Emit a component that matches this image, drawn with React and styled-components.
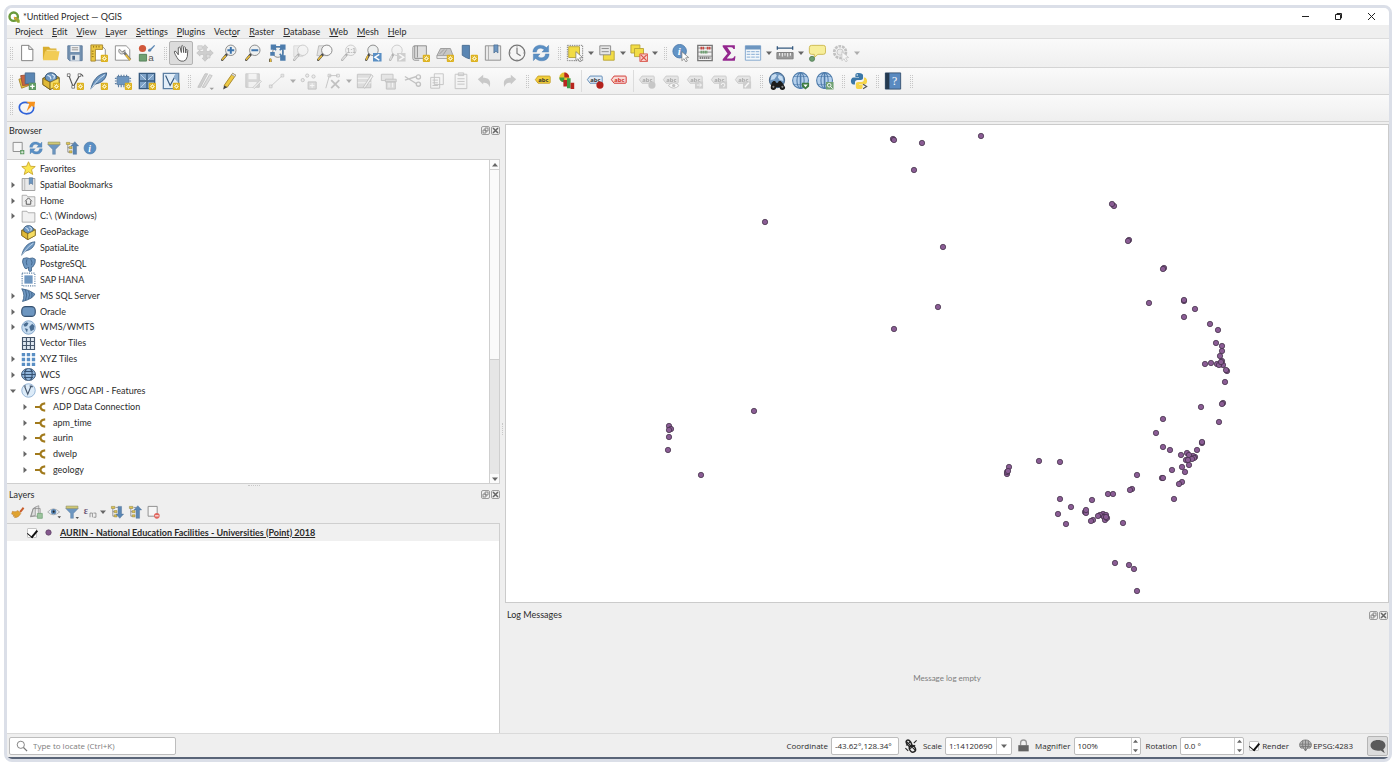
import React from 'react';
import styled, { createGlobalStyle, css } from 'styled-components';

const GlobalStyle = createGlobalStyle`
  * {
    box-sizing: border-box;
  }
  body {
    margin: 0;
    background: #fff;
    color: #2b2b2b;
    font-family: Lato, "Open Sans", sans-serif;
    font-size: 9px;
    font-variant-ligatures: none;
    line-height: 12px;
  }
  button, input, select {
    margin: 0;
    padding: 0;
    border: none;
    background: none;
    color: inherit;
    font: inherit;
  }
  ul {
    margin: 0;
    padding: 0;
    list-style: none;
  }
  svg {
    display: block;
    flex: none;
  }
`

const PageStyled = styled.div`
  display: flex;
  height: 100vh;
  padding: 5px 7px 5px 4px;
`
const WindowStyled = styled.div`
  flex: 1;
  display: flex;
  flex-direction: column;
  min-width: 0;
  border: 3px solid #dbdfe8;
  border-radius: 8px;
  background: #efefef;
  overflow: hidden;
`
const TitleBarStyled = styled.header`
  display: flex;
  align-items: center;
  height: 17px;
  flex: none;
  padding: 0 1px;
  background: #fff;
`
const TitleStyled = styled.h1`
  flex: 1;
  margin: 0 0 0 3px;
  font-size: 9px;
  font-weight: 400;
`
const WindowButtonStyled = styled.button`
  width: 33px;
  height: 17px;
  display: flex;
  align-items: center;
  justify-content: center;
`
const MenuBarStyled = styled.nav`
  display: flex;
  flex: none;
  gap: 9px;
  height: 14px;
  padding-left: 8px;
  border-bottom: 1px solid #dcdcdc;

  u {
    text-underline-offset: 1px;
  }
`
const ToolbarStyled = styled.div`
  display: flex;
  align-items: center;
  flex: none;
  gap: 2px;
  height: ${props => props.$tall ? 29 : 27}px;
  border-bottom: 1px solid #d4d4d4;
  background: linear-gradient(#fafafa, #efefef);
`
const ToolGroupStyled = styled.div`
  display: flex;
  align-items: center;
`
const GripStyled = styled.span`
  width: 3px;
  height: 13px;
  margin: 0 2px 0 3px;
  border: 0 dotted #c6c6c6;
  border-width: 0 1px;
`
const DividerStyled = styled.span`
  width: 1px;
  height: 22px;
  margin: 0 1px 0 2px;
  background: #dcdcdc;
`
const ToolButtonStyled = styled.button`
  display: flex;
  align-items: center;
  justify-content: center;
  width: 24px;
  height: 24px;

  ${props => props.$pressed && css`
    border: 1px solid #b3b3b3;
    border-radius: 2px;
    background: #dcdcdc;
  `}
  ${props => props.disabled && css`
    opacity: 0.4;
    filter: grayscale(1);
  `}
`
const ToolMenuStyled = styled.button`
  display: flex;
  align-items: center;
  justify-content: center;
  width: 8px;
  height: 24px;
  opacity: ${props => props.disabled ? 0.5 : 1};
`
const MainStyled = styled.div`
  display: flex;
  flex: 1;
  min-height: 0;
  padding-top: 2px;
`
const LeftColumnStyled = styled.div`
  flex: 0 0 494px;
  display: grid;
  grid-template-rows: minmax(0, 1fr) 4px 245px;
`
const RightColumnStyled = styled.div`
  flex: 1;
  min-width: 0;
  display: grid;
  grid-template-rows: minmax(0, 1fr) 130px;
`
const SplitterStyled = styled.div`
  display: flex;
  align-items: center;
  justify-content: center;
  flex: 0 0 4px;

  &::after {
    content: "";
    width: ${props => props.$vertical ? 1 : 12}px;
    height: ${props => props.$vertical ? 12 : 1}px;
    border: 0 dotted #c8c8c8;
    border-width: ${props => props.$vertical ? '0 0 0 1px' : '1px 0 0 0'};
  }
`
const DockStyled = styled.section`
  display: flex;
  flex-direction: column;
  min-height: 0;
`
const DockHeaderStyled = styled.div`
  display: flex;
  align-items: center;
  gap: 1px;
  flex: none;
  height: ${props => props.$tall ? 24 : 13}px;
  padding: 0 1px 0 2px;
`
const DockTitleStyled = styled.h2`
  flex: 1;
  margin: 0;
  font-size: 9px;
  font-weight: 400;
`
const DockButtonStyled = styled.button`
  display: flex;
  align-items: center;
  justify-content: center;
  width: 9px;
  height: 9px;
  border: 1px solid #9c9c9c;
  border-radius: 2px;
`
const DockToolsStyled = styled.div`
  display: flex;
  align-items: center;
  flex: none;
  gap: 4px;
  height: 22px;
  padding-left: 4px;

  button {
    display: flex;
    align-items: center;
    gap: 3px;
  }
`
const TreeFrameStyled = styled.div`
  display: flex;
  flex: 1;
  min-height: 0;
  margin-right: 1px;
  border: 1px solid #cfcfcf;
  border-left: none;
  background: #fff;
`
const TreeStyled = styled.ul`
  flex: 1;
  display: grid;
  grid-auto-rows: 1fr;
  padding: 1px 0 5px 0;
`
const TreeRowStyled = styled.li`
  display: flex;
  align-items: center;
  gap: ${props => props.$depth ? 6 : 4}px;
  min-height: 0;
  padding-left: ${props => props.$depth ? 14 : 2}px;
`
const ExpandStyled = styled.button`
  display: flex;
  align-items: center;
  justify-content: center;
  width: 8px;
  height: 12px;
`
const ExpandGapStyled = styled.span`
  width: 8px;
`
const ScrollbarStyled = styled.div`
  display: flex;
  flex-direction: column;
  width: 10px;
  border-left: 1px solid #cfcfcf;
  background: #e6e6e6;
`
const ScrollButtonStyled = styled.button`
  display: flex;
  align-items: center;
  justify-content: center;
  height: 9px;
  background: #fbfbfb;

  &:last-child {
    margin-top: auto;
  }
`
const ScrollThumbStyled = styled.div`
  flex: 0 0 59%;
  border: solid #cfcfcf;
  border-width: 1px 0;
  background: #fafafa;
`
const LayerListStyled = styled.ul`
  flex: 1;
  margin-right: 1px;
  border-top: 1px solid #cfcfcf;
  border-right: 1px solid #cfcfcf;
  background: #fff;
`
const LayerRowStyled = styled.li`
  display: flex;
  align-items: center;
  height: 17px;
  padding-left: 20px;
  background: #f0f0f0;

  label {
    display: flex;
    align-items: center;
    gap: 8px;
    font-weight: 700;
    text-decoration: underline;
  }
`
const CheckboxStyled = styled.input`
  appearance: none;
  display: grid;
  place-items: center;
  width: 10px;
  height: 10px;
  border: 1px solid #c4c4c4;
  border-radius: 1px;
  background: #fff;

  &:checked::after {
    content: "";
    width: 5px;
    height: 8px;
    border: solid #111;
    border-width: 0 2px 1px 0;
    transform: translateY(-1px) rotate(40deg);
  }
`
const MapStyled = styled.div`
  min-height: 0;
  border: 1px solid #cbcbcb;
  background: #fff;

  svg {
    width: 100%;
    height: 100%;
  }
`
const LogBodyStyled = styled.div`
  flex: 1;
  display: flex;
  align-items: center;
  justify-content: center;
  padding-bottom: 4px;
  color: #7d7d7d;
  font-size: 8px;
`
const StatusBarStyled = styled.footer`
  display: flex;
  align-items: center;
  flex: none;
  height: 26px;
  padding: 0 1px 0 2px;
  border-top: 1px solid #dadada;
  border-bottom: 2px solid #5a6578;
  font-family: "Open Sans", sans-serif;
  font-size: 8px;

  label {
    display: flex;
    align-items: center;
    gap: 3px;
  }
`
const FieldStyled = styled.span`
  display: flex;
  align-items: center;
  width: ${props => props.$width}px;
  height: 18px;
  border: 1px solid #bdbdbd;
  border-radius: 2px;
  background: #fff;

  input, select {
    flex: 1;
    min-width: 0;
    height: 16px;
    padding-left: 3px;
    appearance: none;
    outline: none;
  }
  input::placeholder {
    color: #7d7d7d;
    opacity: 1;
  }
`
const LocatorStyled = styled(FieldStyled)`
  margin-right: auto;
  padding-left: 6px;
  gap: 2px;
`
const FieldEndStyled = styled.span`
  display: flex;
  flex-direction: column;
  align-items: center;
  justify-content: center;
  gap: 4px;
  width: ${props => props.$wide ? 15 : 9}px;
  height: 16px;
  border-left: 1px solid #cfcfcf;

  button {
    display: flex;
  }
`
const StatusGroupStyled = styled.div`
  display: flex;
  align-items: center;
  gap: 5px;
`
const CrsButtonStyled = styled.button`
  display: flex;
  align-items: center;
  gap: 1px;
  margin: 0 9px 0 5px;
`
const StatusIconStyled = styled.button`
  display: flex;
  align-items: center;
  justify-content: center;
`
const MessageButtonStyled = styled(StatusIconStyled)`
  width: 21px;
  height: 20px;
  border: 1px solid #b5b5b5;
  border-radius: 2px;
  background: #dcdcdc;
`

// shared bits of the drawings
const Badge = () => (
  <g>
    <rect x="12" y="12" width="8" height="8" rx="1" fill="#dcb11e" />
    <path d="M16 13.2v5.6M13.2 16h5.6M14 14l4 4M18 14l-4 4" stroke="#fff8d0" strokeWidth="1" />
    <circle cx="16" cy="16" r=".8" fill="#dcb11e" />
  </g>
);
const Lens = ({ x = 12, y = 7, r = 5.8, fill = '#eef0f0' }) => (
  <g>
    <path d={`M${x - 4} ${y + 4}L2.5 17.5`} stroke="#4a4a4a" strokeWidth="2.800" strokeLinecap="round" />
    <path d={`M${x - 6} ${y + 6.5}L2.8 17`} stroke="#e3b83c" strokeWidth="1.800" strokeLinecap="round" />
    <circle cx={x} cy={y} r={r} fill={fill} stroke="#858585" strokeWidth="1" />
  </g>
);
const Globe = ({ fill = '#b5d0ec', line = '#4f7cab' }) => (
  <g fill="none" stroke={line} strokeWidth="1.200">
    <circle cx="9.500" cy="9.500" r="8.800" fill={fill} />
    <ellipse cx="9.500" cy="9.500" rx="4" ry="8.800" />
    <path d="M9.500 .7v17.600" strokeWidth="1.800" />
    <path d="M2 5h15M2 14h15" strokeWidth=".7" />
  </g>
);
const Tag = ({ fill, stroke, color = '#333', text = 'abc' }) => (
  <g>
    <path d="M1.500 8.500L4.500 4.500H17q1 0 1 1v6q0 1-1 1H4.500z" fill={fill} stroke={stroke} strokeWidth="1" />
    <text x="4.800" y="10.800" fontSize="6.500" fontWeight="700" fontFamily="Open Sans, sans-serif" fill={color}>{text}</text>
  </g>
);
const Cursor = () => <path d="M11 8.500l7.500 6.500-3.400.4 2 3.400-1.800 1-1.900-3.500-2.400 2.300z" fill="#fff" stroke="#777" strokeWidth=".8" />;
const Funnel = ({ menu }) => (
  <g>
    <path d="M1 5h18l-7 7v7H8v-7z" fill="#6d96c0" stroke="#5c7fa3" strokeWidth=".6" />
    <path d="M1.500 1.500h17V5h-17z" fill="#cfc874" stroke="#8a8a65" strokeWidth=".8" />
    {menu && <path d="M15 17h5l-2.500 3z" fill="#555" />}
  </g>
);
const Refresh = () => (
  <g fill="#5a8fc4" stroke="#4577a9" strokeWidth=".4">
    <path d="M1 9C1 1 11-1 16 4l2.500-2.500V9H11l2.500-2.500C10 3.500 5.500 4.500 5 9z" />
    <path d="M19 11c0 8-10 10-15 5l-2.500 2.500V11H9l-2.500 2.500c3.500 3 8 2 8.500-2.500z" />
  </g>
);
const BookMark = () => (
  <g>
    <path d="M1.500 2h17v16h-17z" fill="#e9e9e9" stroke="#8a8a8a" />
    <path d="M5 2v16" stroke="#aaa" />
    <path d="M11 1h4.500v9l-2.200-2-2.300 2z" fill="#6d96c0" stroke="#4a6d92" strokeWidth=".8" />
  </g>
);
const Package = () => (
  <g strokeLinejoin="round">
    <path d="M1 7l9-5 9 4v8l-10 5.500L1 14z" fill="#d9b02a" stroke="#6b571d" />
    <ellipse cx="10" cy="6" rx="6.500" ry="5.200" fill="#6d96c0" stroke="#2f4f70" />
    <path d="M6 3.500l3 1.500 1 3M11 2.500l3 2-1 3" stroke="#dcebf8" strokeWidth="1.300" fill="none" />
    <path d="M1 7l8 4.500V19.500L1 14z" fill="#e0b936" stroke="#6b571d" strokeWidth=".8" />
    <path d="M9 11.500l10-5V14L9 19.500z" fill="#f6dd62" stroke="#6b571d" strokeWidth=".8" />
  </g>
);
const Feather = () => (
  <g>
    <path d="M1 19C3 10 8 2 18.500 1 18 8 13 12 5.500 13.500z" fill="#6d96c0" stroke="#35597f" />
    <path d="M1 19C6 12 10 7 16.500 3" stroke="#dcebf8" fill="none" />
  </g>
);
const Tree = ({ up }) => (
  <g>
    <path d="M2 2h5v3H2zM6 8h4v3H6zM6 14h4v3H6z" fill="#e3c44d" stroke="#8f8745" strokeWidth=".8" />
    <path d="M4 5v11h2M4 9.500h2M8 3.500h4" stroke="#777" fill="none" />
    {up
      ? <path d="M14 1l5.500 6H16.500v12h-5V7h-3z" fill="#5a86b3" stroke="#4a6d92" strokeWidth=".6" />
      : <path d="M14 19l5.500-6H16.500V2h-5v11h-3z" fill="#5a86b3" stroke="#4a6d92" strokeWidth=".6" />}
  </g>
);
const VPath = () => (
  <g fill="none">
    <path d="M3 3.500l5 13L15 4q2-3 4 1" stroke="#555" strokeWidth="1.300" />
    <path d="M1.500 2h3v3h-3zM6.500 15h3v3h-3zM13.500 2h3v3h-3z" fill="#fff" stroke="#555" strokeWidth=".8" />
  </g>
);

const icons = {
  newProject: <path d="M4 1.500h8l4.500 4.500v12.500H4zM12 1.500V6h4.500" fill="#fff" stroke="#777" />,
  open: (
    <g>
      <path d="M1 3h6.500l2 2H16v12H1z" fill="#d9ae30" />
      <path d="M3.500 8H19.500l-2 10H1z" fill="#f2cc55" />
      <path d="M5 6.500h11V8H5z" fill="#f7dd86" />
    </g>
  ),
  save: (
    <g>
      <path d="M2 2h16v16.500H4l-2-2z" fill="#7391b0" stroke="#5d7a9c" />
      <path d="M5 2h10v7H5z" fill="#f2f2f2" />
      <path d="M6.500 4.200h7M6.500 6.500h7" stroke="#8a8a8a" />
      <path d="M5 12h10v6.500H5z" fill="#dfe5ea" /><path d="M7 13h3v4.500H7z" fill="#48668a" />
    </g>
  ),
  layout: (
    <g>
      <path d="M5 2h8l4 4v12H5z" fill="#fff" stroke="#888" />
      <path d="M1 1h13v5H6v13H1z" fill="#edc944" stroke="#a5852a" />
      <path d="M4 2v2M7 2v2M10 2v2M2 8h2M2 11h2M2 14h2" stroke="#8b6d14" /><Badge />
    </g>
  ),
  layoutManager: (
    <g>
      <path d="M1.500 2h12l4 4v12h-16z" fill="#fff" stroke="#888" />
      <path d="M10 8l8 9.500" stroke="#777" strokeWidth="3" /><path d="M13 12l5 6" stroke="#e3b83c" strokeWidth="2" />
      <path d="M6 5.500a3.500 3.500 0 1 0 6 1l-2 2.500-2-1z" fill="#d8d8d8" stroke="#777" strokeWidth=".8" />
    </g>
  ),
  style: (
    <g>
      <circle cx="5" cy="5" r="4" fill="#d1583b" /><path d="M1.500 11.500h8v7.500h-8z" fill="#6fa072" stroke="#557f58" />
      <path d="M11 8q0-3 3-3l4-4 1 1-4 4.500q0 3-4 1.500z" fill="#5a86b3" />
      <text x="11.500" y="18.500" fontSize="11" fontFamily="Liberation Sans" fill="#555">a</text>
    </g>
  ),
  hand: <path d="M7 12L4.500 8.500Q3 7 2.500 8.800 3 11 5.500 15q1.500 3.500 4.500 4h3q3-.5 4-5l.5-7q-.7-2-1.900-.4l-.3 3.400-.4-6q-.9-1.900-2 0V9.500l-.6-7q-1-1.900-2 0l.1 7L9 4q-1.200-1.500-2 .2z" fill="#fff" stroke="#555" strokeLinejoin="round" />,
  panSelection: <g fill="#999" stroke="#777" strokeWidth=".8"><path d="M10 .8l3.200 3.500H11.500v4h4V6.500L19.200 10l-3.700 3.500v-1.800h-4v4h1.700L10 19.200l-3.200-3.500h1.700v-4h-4v1.800L.8 10l3.700-3.500v1.800h4v-4H6.800z" /><path d="M2 2h5v4H2zM11.500 11.500h4v4h-4z" fill="#bbb" /></g>,
  zoomIn: <g><Lens /><path d="M12 3.200v7.600M8.200 7h7.600" stroke="#3d74ad" strokeWidth="2.200" /></g>,
  zoomOut: <g><Lens /><path d="M8.200 7h7.600" stroke="#3d74ad" strokeWidth="2.200" /></g>,
  zoomFull: (
    <g>
      <Lens x="11" y="9" />
      <path d="M3 .5h6v6H3zM13.500 .5h6v6h-6zM13.500 12.500h6v6h-6zM2.500 9h5v4h-5z" fill="#4d7dad" />
      <path d="M5 3l4 4M17 3l-4 4M17 15l-4-4M8 3h7M16.500 6v8" stroke="#4d7dad" strokeWidth="1.800" />
    </g>
  ),
  zoomSelection: <g><path d="M2 2h10v12H2z" fill="#ddd" stroke="#aaa" /><Lens /></g>,
  zoomLayer: <g><path d="M3 2h12l-2 11H1z" fill="#e4e4e4" stroke="#bbb" /><Lens fill="#f8f8f8" /></g>,
  zoomNative: <g><Lens /><text x="7.500" y="9.500" fontSize="7" fontWeight="700" fontFamily="Liberation Sans" fill="#555">1:1</text></g>,
  zoomLast: <g><Lens x={10} /><path d="M10 10h9.500v9.500H10z" fill="#5a8fc4" /><path d="M17 11.500L12 14.700l5 3.200" stroke="#fff" strokeWidth="1.600" fill="none" /></g>,
  zoomNext: <g><Lens x={10} /><path d="M10 10h9.500v9.500H10z" fill="#999" /><path d="M12.500 11.500l5 3.200-5 3.200" stroke="#fff" strokeWidth="1.600" fill="none" /></g>,
  newMap: <g><path d="M3 2h13v14H3z" fill="#e0e0e0" stroke="#888" /><path d="M3 2q-2 0-2 2v12q0 2 2 2h5M6 2v13" stroke="#888" fill="none" /><Badge /></g>,
  new3d: <g><path d="M5 5h11l3 8H1z" fill="#c6c6c6" stroke="#999" /><path d="M1 13v3h12M4 11l5-5M8 12l4-6" stroke="#999" fill="none" /><Badge /></g>,
  newBookmark: <g><path d="M2.500 1.500h8v15l-4-1.500-4-2.500z" fill="#5a86b3" stroke="#4a6d92" /><Badge /></g>,
  bookmarks: <BookMark />,
  clock: <g fill="none" stroke="#777"><circle cx="10" cy="10" r="8.700" fill="#f5f5f5" strokeWidth="1.300" /><path d="M10 4v6.500l4 2.500" strokeWidth="1.300" /><path d="M10 2v1M10 17v1M2 10h1M17 10h1" /></g>,
  refresh: <Refresh />,
  select: <g><path d="M1.500 1.500h17v17h-17z" fill="none" stroke="#777" strokeDasharray="1.500 1" /><path d="M3 3h12v12H3z" fill="#f2dc45" stroke="#b8a436" /><Cursor /></g>,
  selectValue: <g><path d="M6 8h12v10H6z" fill="#f2dc45" stroke="#b8a436" /><path d="M2 2h12v10H2z" fill="#e6e6e6" stroke="#888" /><path d="M4 5h8M4 8.500h8" stroke="#888" /></g>,
  deselect: <g><path d="M1 1h10v9H1z" fill="#f2dc45" stroke="#b8a436" /><path d="M5 5h10v9H5z" fill="#f2dc45" stroke="#b8a436" /><path d="M11 11h8.500v8.500H11z" fill="#f8d0cc" stroke="#d9534a" /><path d="M12 12l6.500 6.500M18.500 12L12 18.500" stroke="#d9534a" strokeWidth="1.300" /></g>,
  identify: <g><circle cx="8.500" cy="8" r="7.500" fill="#6394c6" stroke="#4f7cab" /><text x="6.500" y="12.500" fontSize="12" fontStyle="italic" fontWeight="700" fontFamily="Liberation Serif" fill="#fff">i</text><Cursor /></g>,
  calculator: (
    <g>
      <path d="M2 1.500h16v17H2z" fill="#f1f1f1" stroke="#777" strokeWidth="1.500" /><path d="M2 4.500h16M2 9h16M2 13.500h16" stroke="#888" />
      <path d="M5 4.500h4M12 4.500h4" stroke="#c9473f" strokeWidth="3" strokeDasharray="2 .5" /><path d="M5 9h8" stroke="#6fa072" strokeWidth="3" strokeDasharray="2 .5" />
      <path d="M4 15.500h12" stroke="#777" strokeWidth="2.500" strokeDasharray="1.500 .7" />
    </g>
  ),
  sum: <path d="M3 1.500h13.500v4H15q-.5-1.800-2.500-1.800H8L12.500 10 7.500 16H13q2 0 3-2.500h1.200L16.500 18.500H3V17l5.300-6.500L3 3z" fill="#94278f" />,
  table: <g><path d="M1.500 2h17v16h-17z" fill="#f4f8fb" stroke="#7ca3cb" /><path d="M1.500 2h17v4h-17z" fill="#6d96c0" /><path d="M3 8.500h14M3 11.500h14M3 14.500h14" stroke="#9bbadb" strokeWidth="1.500" strokeDasharray="4 1" /></g>,
  measure: <g><path d="M1.500 4.500h17M1.500 2.500v4M18.500 2.500v4" stroke="#35597f" strokeWidth="1.500" /><path d="M1 9.500h18v7H1z" fill="#999" stroke="#777" /><path d="M4 10v3M7 10v4M10 10v3M13 10v4M16 10v3" stroke="#fff" /></g>,
  mapTips: <g><path d="M4 1.500h13q2.500 0 2.500 2.500v5q0 2.500-2.500 2.500H11L7 15v-3.500H4Q1.500 11.500 1.500 9V4Q1.500 1.500 4 1.500z" fill="#f7ee9a" stroke="#cbb84e" /><circle cx="4.500" cy="16.500" r="2.800" fill="#6fa072" stroke="#557f58" /></g>,
  actions: <g><circle cx="9" cy="9" r="6.500" fill="none" stroke="#777" strokeWidth="3" strokeDasharray="3 1" /><circle cx="9" cy="9" r="3.500" fill="#ddd" stroke="#777" /><Cursor /></g>,

  addLayer: (
    <g>
      <path d="M1 8l8-2 3 9-8 3z" fill="#e8c33c" stroke="#a5852a" /><path d="M3 4l9-1 2 11-9 1z" fill="#c9643f" stroke="#9c5238" />
      <path d="M8 1h10.500v11L8 13z" fill="#5a86b3" stroke="#4a6d92" /><path d="M12 12h8v8h-8z" fill="#5f9a63" /><path d="M16 13.500v5M13.500 16h5" stroke="#fff" strokeWidth="1.500" />
    </g>
  ),
  newPackage: <g><Package /><Badge /></g>,
  newShape: <g><VPath /><Badge /></g>,
  newSpatialite: <g><Feather /><Badge /></g>,
  newScratch: <g><path d="M3.500 5h13v9h-13z" fill="#6d96c0" stroke="#5c7fa3" /><path d="M5 3v2M8 3v2M11 3v2M14 3v2M5 14v3M8 14v3M11 14v3M1 7h2M1 10h2M1 13h2M17 7h2M17 10h2" stroke="#5c7fa3" strokeWidth="1.300" /><Badge /></g>,
  newMesh: <g><path d="M1.500 1.500h17v17h-17z" fill="#7fa3c8" stroke="#35597f" strokeWidth="1.500" /><path d="M1.500 10h17M10 1.500v17" stroke="#35597f" strokeWidth="1.500" /><path d="M3 3l6 6M17 3l-6 6M3 17l6-6" stroke="#dcebf8" strokeWidth=".8" /><Badge /></g>,
  newVirtual: <g><path d="M1.500 1.500h17v17h-17z" fill="#e3eef8" stroke="#5c7fa3" strokeWidth="1.500" /><path d="M4 4l5 11 6-11" stroke="#35597f" strokeWidth="1.300" fill="none" /><path d="M13 6l5 6V2h-3z" fill="#8fb1d3" /><Badge /></g>,
  edits: <g><path d="M2 17l8-15h3L5 17z" fill="#999" stroke="#777" /><path d="M7 17l8-14 3 1-8 13z" fill="#bbb" stroke="#777" /><path d="M15 17.500h5l-2.500 2.500z" fill="#222" /></g>,
  pencil: <g><path d="M14 1.500l3.500 2L8 17l-3.500-2z" fill="#edc944" stroke="#a5852a" /><path d="M4.500 15L8 17l-4.500 2.500z" fill="#444" /><path d="M14 1.500l3.500 2-1 1.500L13 3z" fill="#e9e9e9" stroke="#888" strokeWidth=".6" /></g>,
  saveEdits: <g><path d="M2 2h15v15H2z" fill="#aaa" stroke="#888" /><path d="M5 2h9v6H5zM5 11h9v6H5z" fill="#eee" /><path d="M10 17l8-8 1.500 1.500-8 8z" fill="#ddd" stroke="#777" strokeWidth=".7" /></g>,
  line: <path d="M3 16L16 4M1.500 14.500h3v3h-3zM14.500 2.500h3v3h-3z" fill="#eee" stroke="#888" />,
  addPoint: <g fill="#ddd" stroke="#777"><circle cx="3" cy="9" r="1.800" /><circle cx="8" cy="4" r="1.800" /><circle cx="15" cy="5" r="1.800" /><path d="M9 11h9v8H9z" fill="#bbb" /><path d="M13.500 12.500v5M11 15h5" stroke="#fff" /></g>,
  vertex: <g fill="none" stroke="#777"><path d="M2 18L6 4h9M4.500 2.500h3v3h-3zM14 2.500h3v3h-3z" /><path d="M8 9l9 9M17 9l-9 9" strokeWidth="2" /></g>,
  modify: <g><path d="M1.500 2.500h15v15h-15z" fill="#bbb" stroke="#777" /><path d="M2 7h15M2 12h15" stroke="#fff" /><path d="M8 17l9-14 2 1.500L10 18z" fill="#eee" stroke="#777" /></g>,
  remove: <g><path d="M1.500 2.500h13v7h-13z" fill="#ccc" stroke="#777" /><path d="M6 8h12v3H6zM7 11h10v8H7z" fill="#bbb" stroke="#777" /><path d="M10 12v5M14 12v5" stroke="#fff" /></g>,
  cut: <g fill="none" stroke="#777" strokeWidth="1.500"><path d="M1 5l13 8M1 9l13-4" /><circle cx="16" cy="5.500" r="2.300" /><circle cx="16" cy="13.500" r="2.300" /></g>,
  copy: <path d="M7 2h10v12H7zM3 6h10v12H3zM5 9h6M5 12h6M5 15h6" fill="#f4f4f4" stroke="#777" />,
  paste: <path d="M3.500 2.500h13v16h-13zM7 1h6v3H7zM6 7.500h8M6 10.500h8M6 13.500h8" fill="#f4f4f4" stroke="#777" />,
  undo: <path d="M2 8l6-5v3.500c7 0 9 4 7 10.500-1-4-3-5-7-5V14z" fill="#888" />,
  redo: <path d="M18 8l-6-5v3.500c-7 0-9 4-7 10.500 1-4 3-5 7-5V14z" fill="#888" />,
  label: <Tag fill="#f2cf3a" stroke="#c7a22c" />,
  diagram: <g><circle cx="7" cy="6" r="5.500" fill="#e3c02c" /><path d="M7 6V.5A5.500 5.500 0 0 1 12.500 6z" fill="#b9251e" /><path d="M7 6H1.500A5.500 5.500 0 0 0 7 11.500z" fill="#3d9a42" /><path d="M6 9h4v7H6z" fill="#b9251e" /><path d="M10 7h4v11h-4z" fill="#3d9a42" /><path d="M14 12h4v7h-4z" fill="#b9251e" /></g>,
  labelPin: <g><Tag fill="#dfeaf5" stroke="#5a86b3" /><circle cx="15.500" cy="14.500" r="4" fill="#b3211c" /></g>,
  labelRed: <Tag fill="#f8d9d6" stroke="#d0302a" color="#d0302a" />,
  labelOff1: <g><Tag fill="#ccc" stroke="#888" /><circle cx="15.500" cy="14.500" r="4" fill="#888" /></g>,
  labelOff2: <g><Tag fill="#ccc" stroke="#888" /><path d="M7 15q6-6 12 0-6 6-12 0z" fill="#fff" stroke="#777" /><circle cx="13" cy="15" r="1.800" fill="#777" /></g>,
  labelOff3: <g><Tag fill="#ccc" stroke="#888" /><path d="M10 10.500h9v8h-9z" fill="#999" /><path d="M12 14.500h5M15 12.500l2.200 2-2.200 2" stroke="#fff" fill="none" /></g>,
  labelOff4: <g><Tag fill="#ccc" stroke="#888" /><path d="M10 10.500h9v8h-9z" fill="#999" /><path d="M12.500 14.500a2 2 0 1 1 2 2" stroke="#fff" fill="none" /></g>,
  labelOff5: <g><Tag fill="#ccc" stroke="#888" /><path d="M10 10.500h9v8h-9z" fill="#999" /><path d="M12 17l4.500-5" stroke="#fff" strokeWidth="1.500" /></g>,
  metasearch: (
    <g>
      <circle cx="10" cy="9" r="8.500" fill="#6d96c0" stroke="#35597f" /><path d="M4 4l4-2 2 2-3 4-4 1zM12 3l4 2 1 5-4-1-2-3z" fill="#c6dcf0" />
      <path d="M4 12l2-2h2l1 2h2l1-2h2l2 2 3 5q0 3-3 3t-3-3h-4q0 3-3 3t-3-3z" fill="#1c1c1c" /><circle cx="6" cy="16.500" r="1.200" fill="#888" /><circle cx="16" cy="16.500" r="1.200" fill="#888" />
    </g>
  ),
  globeDown: <g><Globe /><path d="M11 12h8v4l-4 3.500-4-3.500z" fill="#3d7d42" /><path d="M12.500 14h5L15 17z" fill="#fff" /></g>,
  globeZoom: <g><Globe /><path d="M11 11h8.500v8.500H11z" fill="#6fa072" /><circle cx="14.700" cy="14.700" r="2" fill="none" stroke="#fff" /><path d="M16 16l2.500 2.500" stroke="#fff" /></g>,
  python: (
    <g>
      <path d="M9.500 1C6 1 6 2.500 6 4v1.500h4V6H4C2 6 1 8 1 10s1 4 3 4h1.500v-2c0-2 1-3 3-3h3.500c1.500 0 2.500-1 2.500-2.500V4C14.500 2 13 1 9.500 1z" fill="#3b77a8" />
      <path d="M10.500 19c3.500 0 3.500-1.500 3.500-3v-1.500h-4V14h6c2 0 3-2 3-4s-1-4-3-4h-.5v2c0 2-1 3-3 3H9c-1.500 0-2.500 1-2.500 2.500V16c0 2 .5 3 4 3z" fill="#f6d54a" />
      <circle cx="8" cy="3.300" r=".8" fill="#fff" /><path d="M14.500 13.500l4 2.500-4 2.500" stroke="#555" strokeWidth="1.300" fill="none" />
    </g>
  ),
  help: <g><path d="M1.500 1h17v18h-17z" fill="#5a8ac0" stroke="#35506f" /><path d="M1.500 1H6v18H1.500z" fill="#24394f" /><text x="9" y="14.500" fontSize="13" fontFamily="Liberation Serif" fill="#fff">?</text></g>,
  aurin: <g><path d="M12 4.500C5 2 1 6 1.500 10c.5 5 6 7.500 11 6 4-1.300 6-5 4.500-8.500" fill="none" stroke="#2f62d9" strokeWidth="1.800" /><path d="M9 3h10l-1 6.500-2.500-2-6 6.500 3-8.500z" fill="#f5921e" /></g>,

  addItem: <g><path d="M3 2h13v13H3z" fill="#f6f6f6" stroke="#888" strokeWidth="1.300" /><path d="M13 13h6v6h-6z" fill="#5f9a63" /><path d="M16 14v4M14 16h4" stroke="#fff" /></g>,
  filter: <Funnel />,
  filterMenu: <Funnel menu />,
  collapse: <Tree up />,
  expand: <Tree />,
  info: <g><circle cx="10" cy="10" r="8.500" fill="#5a8fc4" stroke="#4f7cab" /><text x="7.500" y="15" fontSize="14" fontStyle="italic" fontWeight="700" fontFamily="Liberation Serif" fill="#fff">i</text></g>,
  brush: <g><path d="M12 9l5-6 2 2-5 6z" fill="#c95d2b" /><path d="M2 9q4 2 8-1l4 4q-3 6-9 6l1-2-3 0 1-2-3-1z" fill="#e0a32e" stroke="#c08030" strokeWidth=".8" /></g>,
  addGroup: <g><path d="M2 17L6 5l3-2v12zM9 3l5-2v14" fill="#ddd" stroke="#888" /><path d="M6 5h10v11H3z" fill="none" stroke="#888" /><path d="M12 12h7v7h-7z" fill="#9cc49e" stroke="#6fa072" /></g>,
  eye: <g><path d="M1 10q8-9 17 0-9 8-17 0z" fill="#e8eef4" stroke="#999" /><circle cx="9.500" cy="9.500" r="3.800" fill="#5a86b3" /><circle cx="9.500" cy="9.500" r="1.500" fill="#222" /><path d="M15 16h5l-2.500 3z" fill="#444" /></g>,
  expression: <g><text x="1" y="13" fontSize="14" fontWeight="700" fontFamily="Liberation Serif" fill="#6b5575">ε</text><path d="M10 17.500v-6h3.500v6M15 17.500h3.500v-6H15" stroke="#777" fill="none" /></g>,
  removeLayer: <g><path d="M3 2h13v14H3z" fill="#f6f6f6" stroke="#888" strokeWidth="1.300" /><circle cx="15.500" cy="15.500" r="4" fill="#e0655d" /><path d="M13 15.500h5" stroke="#fff" strokeWidth="1.500" /></g>,

  star: <path d="M10 1l2.600 6 6.400.4-5 4.200 1.700 6.400L10 14.500 4.300 18 6 11.600 1 7.400 7.400 7z" fill="#fbe64f" stroke="#c9a62e" strokeWidth="1.200" strokeLinejoin="round" />,
  home: <g><path d="M1.500 3h6l1.500 2h9.500v12.500h-17z" fill="#efefef" stroke="#999" /><path d="M5.500 11L10 6.500l4.500 4.500M7 10.500V15h6v-4.500" fill="none" stroke="#555" strokeWidth="1.300" /></g>,
  folder: <path d="M1.500 3h6.500l1.500 2h9v12.500h-17z" fill="#f1f1f1" stroke="#999" />,
  geopackage: <Package />,
  spatialite: <Feather />,
  postgres: <g stroke="#35597f"><path d="M3 2q5-2 8 0 5-2 8 1 1 5-3 10l-2 .5v5q-3 2-4-1v-4l-2 2q-3 1-4-3Q.5 6 3 2z" fill="#6d96c0" /><path d="M8 3q-2 4 0 8M13 3q3 4 1 8" fill="none" /></g>,
  hana: <g><path d="M4.500 4.500h11v11h-11z" fill="#6d96c0" /><path d="M1.500 1.500h17v17h-17z" fill="none" stroke="#5c7fa3" strokeWidth="1.500" strokeDasharray="1.500 1.500" /></g>,
  mssql: <g><path d="M1 1q10 1 17.500 7-2 6-16.500 10 4-8-1-17z" fill="#6d96c0" stroke="#35597f" /><path d="M6 2.500q3 7 0 14M10 4q3 5 0 10.500M14 6q1.500 3 0 7" fill="none" stroke="#35597f" /></g>,
  oracle: <rect x="1" y="3.500" width="18" height="13" rx="5" fill="#6d96c0" stroke="#35506f" strokeWidth="1.500" />,
  wms: <g><circle cx="10" cy="10" r="9" fill="#c6dcf0" stroke="#6d96c0" /><path d="M3 6l4-3 3 1-2 4-3 1zM11 9l4-4 3 3-1 5-4 2zM5 11l4 1-1 5z" fill="#4a6d92" /></g>,
  vectorTiles: <path d="M2 2h16v16H2zM2 7.300h16M2 12.600h16M7.300 2v16M12.600 2v16" fill="#dfe8f1" stroke="#45566b" strokeWidth="1.500" />,
  xyz: <path d="M1 3.500h18M1 10h18M1 16.500h18" stroke="#5a8fc4" strokeWidth="4.500" strokeDasharray="4.500 2.200" />,
  wcs: <g fill="none" stroke="#35506f" strokeWidth="1.200"><ellipse cx="10" cy="10" rx="9.300" ry="8" fill="#8fb4da" /><path d="M7 2.500q-4 7 0 15M13 2.500q4 7 0 15" strokeWidth="1.500" /><path d="M.7 10h18.600M4 6h12M4 14h12" strokeWidth="1.300" /></g>,
  wfs: <g fill="none"><circle cx="10" cy="10" r="9" fill="#dcebf8" stroke="#7ca3cb" /><path d="M5 5l4 10 4-10h3M3.500 4h3M11.500 4h3" stroke="#45566b" strokeWidth="1.500" /></g>,
  connection: <path d="M0 10h8M17 4q-7 .5-8 6 1 5.500 8 6" fill="none" stroke="#a17a1c" strokeWidth="3.600" />,

  logo: <g><circle cx="9.500" cy="9.500" r="7" fill="#fff" stroke="#6a9a3c" strokeWidth="4" /><path d="M10 10h4.500l5 5v4.500H16l-6-6z" fill="#93a833" /><path d="M10 10l4 4" stroke="#ee9a33" strokeWidth="2" /></g>,
  search: <g fill="none" stroke="#777"><circle cx="8" cy="8" r="6" strokeWidth="1.500" /><path d="M12.500 12.500l6 6" strokeWidth="2" /></g>,
  extents: <g fill="none" stroke="#222" strokeWidth="2"><ellipse cx="7" cy="6" rx="3" ry="5" transform="rotate(-35 7 6)" /><ellipse cx="12" cy="14" rx="4" ry="5" transform="rotate(-35 12 14)" /><path d="M3 3l14 14M3 9l6-5M8 14l8-5M2 13l4 4M14 6l4-4" strokeWidth="1.500" /></g>,
  lock: <g><path d="M5.500 10V6q0-4.500 4.500-4.500T14.500 6v4" fill="none" stroke="#999" strokeWidth="2" /><path d="M2 9.500h16V19H2z" fill="#636363" /></g>,
  crs: <g fill="none" stroke="#777" strokeWidth="1.300"><path d="M1 8Q3 1.500 10 1.500T19 8q.5 4-2 6h-4l-3 4.500L7 14H3q-2.500-2-2-6z" fill="#b5b5b5" /><path d="M1 8h18M2 11.500h16M10 1.500v17M6 2.500q-2 6 1 12M14 2.500q2 6-1 12" /></g>,
  message: <path d="M10 2.500c5.500 0 9.300 2.800 9.300 6.700 0 2.300-1 3.800-2.800 5l2 4.800-5-3.300c-1 .2-2.200.3-3.500.3-5.500 0-9.300-2.900-9.300-6.800S4.500 2.500 10 2.500z" fill="#5b5b5b" />
};

const Icon = ({ name, size = 20 }) => (
  <svg width={size} height={size} viewBox="0 0 20 20" aria-hidden="true">{icons[name]}</svg>
);

const turns = { down: 0, up: 180, right: 270 };

const Arrow = ({ to = 'down', size = 6 }) => (
  <svg width={size} height={size} viewBox="0 0 6 6" aria-hidden="true">
    <path d="M0 1.500h6L3 5z" fill="#666" transform={`rotate(${turns[to]} 3 3)`} />
  </svg>
);

const menus = [
  ['Pro', 'j', 'ect'], ['', 'E', 'dit'], ['', 'V', 'iew'], ['', 'L', 'ayer'], ['', 'S', 'ettings'],
  ['', 'P', 'lugins'], ['Vect', 'o', 'r'], ['', 'R', 'aster'], ['', 'D', 'atabase'], ['', 'W', 'eb'],
  ['', 'M', 'esh'], ['', 'H', 'elp']
];

// "!" = disabled, "*" = pressed, ":v" = has a menu, "|" = divider
const projectTools = [
  ['newProject', 'open', 'save', 'layout', 'layoutManager', 'style'],
  ['*hand', '!panSelection', 'zoomIn', 'zoomOut', 'zoomFull', '!zoomSelection', 'zoomLayer', '!zoomNative',
    'zoomLast', '!zoomNext', 'newMap', 'new3d', 'newBookmark', 'bookmarks', 'clock', 'refresh'],
  ['select:v', 'selectValue:v', 'deselect:v'],
  ['identify', 'calculator', 'sum', 'table:v', 'measure:v', 'mapTips', '!actions:v']
];
const layerTools = [
  ['addLayer', 'newPackage', 'newShape', 'newSpatialite', 'newScratch', 'newMesh', 'newVirtual'],
  ['!edits', 'pencil', '!saveEdits', '!line:v', '!addPoint', '!vertex:v', '!modify', '!remove', '!cut',
    '!copy', '!paste', '!undo', '!redo'],
  ['label', 'diagram', '|', 'labelPin', 'labelRed', '|', '!labelOff1', '!labelOff2', '!labelOff3',
    '!labelOff4', '!labelOff5'],
  ['metasearch', 'globeDown', 'globeZoom'],
  ['python'],
  ['help'],
  []
];
const pluginTools = [['aurin']];

const browserItems = [
  { icon: 'star', text: 'Favorites' },
  { icon: 'bookmarks', text: 'Spatial Bookmarks', arrow: 'right' },
  { icon: 'home', text: 'Home', arrow: 'right' },
  { icon: 'folder', text: 'C:\\ (Windows)', arrow: 'right' },
  { icon: 'geopackage', text: 'GeoPackage' },
  { icon: 'spatialite', text: 'SpatiaLite' },
  { icon: 'postgres', text: 'PostgreSQL' },
  { icon: 'hana', text: 'SAP HANA' },
  { icon: 'mssql', text: 'MS SQL Server', arrow: 'right' },
  { icon: 'oracle', text: 'Oracle', arrow: 'right' },
  { icon: 'wms', text: 'WMS/WMTS', arrow: 'right' },
  { icon: 'vectorTiles', text: 'Vector Tiles' },
  { icon: 'xyz', text: 'XYZ Tiles', arrow: 'right' },
  { icon: 'wcs', text: 'WCS', arrow: 'right' },
  { icon: 'wfs', text: 'WFS / OGC API - Features', arrow: 'down' },
  { icon: 'connection', text: 'ADP Data Connection', arrow: 'right', depth: 1 },
  { icon: 'connection', text: 'apm_time', arrow: 'right', depth: 1 },
  { icon: 'connection', text: 'aurin', arrow: 'right', depth: 1 },
  { icon: 'connection', text: 'dwelp', arrow: 'right', depth: 1 },
  { icon: 'connection', text: 'geology', arrow: 'right', depth: 1 }
];

const points = [
  [893, 139], [894, 140], [922, 143], [981, 136], [914, 170], [765, 222], [943, 247], [938, 307], [894, 329],
  [754, 411], [669, 426], [671, 429], [669, 430], [669, 437], [668, 450], [701, 475],
  [1114, 206], [1112, 204], [1129, 240], [1128, 241], [1164, 268], [1163, 269], [1149, 303], [1184, 301],
  [1184, 300], [1195, 309], [1184, 317], [1210, 324], [1218, 330], [1216, 343], [1222, 346], [1222, 351],
  [1220, 356], [1205, 364], [1211, 363], [1217, 364], [1223, 365], [1219, 365], [1222, 361], [1221, 362],
  [1227, 371], [1226, 370], [1225, 382], [1223, 403], [1222, 404], [1201, 407], [1219, 422], [1163, 419],
  [1156, 433], [1163, 447], [1170, 450], [1202, 443], [1202, 442], [1197, 450], [1181, 455], [1187, 453],
  [1195, 457], [1193, 456], [1194, 458], [1189, 455], [1192, 459], [1186, 460], [1188, 460], [1189, 465],
  [1182, 467], [1185, 472], [1172, 470], [1162, 478], [1163, 478], [1182, 482], [1179, 484], [1174, 499],
  [1137, 475], [1132, 489], [1130, 490], [1108, 494], [1113, 494], [1092, 500], [1060, 499], [1071, 507],
  [1058, 514], [1066, 524], [1085, 512], [1086, 513], [1086, 510], [1093, 520], [1091, 521], [1103, 514],
  [1106, 515], [1100, 515], [1098, 516], [1104, 517], [1105, 520], [1107, 518], [1106, 517], [1123, 523],
  [1115, 563], [1129, 565], [1134, 569], [1137, 591], [1039, 461], [1060, 462], [1009, 467], [1007, 474],
  [1007, 472], [1008, 471]
];

const ToolGroup = ({ tools }) => (
  <ToolGroupStyled>
    <GripStyled />
    {tools.map((tool, i) => {
      if (tool === '|') return <DividerStyled key={i} />;
      const [name, menu] = tool.replace(/[!*]/, '').split(':');
      const off = tool[0] === '!';
      return (
        <React.Fragment key={name}>
          <ToolButtonStyled aria-label={name} disabled={off} $pressed={tool[0] === '*'}>
            <Icon name={name} size={18} />
          </ToolButtonStyled>
          {menu && <ToolMenuStyled aria-label={`${name} menu`} disabled={off}><Arrow /></ToolMenuStyled>}
        </React.Fragment>
      );
    })}
  </ToolGroupStyled>
);

const Toolbar = ({ groups, tall }) => (
  <ToolbarStyled role="toolbar" $tall={tall}>
    {groups.map((tools, i) => <ToolGroup key={i} tools={tools} />)}
  </ToolbarStyled>
);

const DockHeader = ({ title, tall }) => (
  <DockHeaderStyled $tall={tall}>
    <DockTitleStyled>{title}</DockTitleStyled>
    <DockButtonStyled aria-label={`Float ${title}`}>
      <svg width="7" height="7" viewBox="0 0 7 7"><path d="M3 1h3v3H3zM1 3h3v3H1z" fill="none" stroke="#777" strokeWidth=".8" /></svg>
    </DockButtonStyled>
    <DockButtonStyled aria-label={`Close ${title}`}>
      <svg width="7" height="7" viewBox="0 0 7 7"><path d="M1 1l5 5M6 1L1 6" stroke="#666" strokeWidth="1.500" /></svg>
    </DockButtonStyled>
  </DockHeaderStyled>
);

const DockTools = ({ tools }) => (
  <DockToolsStyled>
    {tools.map(tool => {
      const [name, menu] = tool.split(':');
      return (
        <button key={name} aria-label={name}>
          <Icon name={name} size={14} />
          {menu && <Arrow />}
        </button>
      );
    })}
  </DockToolsStyled>
);

const Browser = () => (
  <DockStyled>
    <DockHeader title="Browser" />
    <DockTools tools={['addItem', 'refresh', 'filter', 'collapse', 'info']} />
    <TreeFrameStyled>
      <TreeStyled>
        {browserItems.map(item => (
          <TreeRowStyled key={item.text} $depth={item.depth}>
            {item.arrow
              ? <ExpandStyled aria-label={`Toggle ${item.text}`}><Arrow to={item.arrow} /></ExpandStyled>
              : <ExpandGapStyled />}
            <Icon name={item.icon} size={item.depth ? 12 : 15} />
            <span>{item.text}</span>
          </TreeRowStyled>
        ))}
      </TreeStyled>
      <ScrollbarStyled>
        <ScrollButtonStyled aria-label="Scroll up"><Arrow to="up" /></ScrollButtonStyled>
        <ScrollThumbStyled />
        <ScrollButtonStyled aria-label="Scroll down"><Arrow /></ScrollButtonStyled>
      </ScrollbarStyled>
    </TreeFrameStyled>
  </DockStyled>
);

const Layers = () => (
  <DockStyled>
    <DockHeader title="Layers" />
    <DockTools tools={['brush', 'addGroup', 'eye', 'filterMenu', 'expression:v', 'expand', 'collapse', 'removeLayer']} />
    <LayerListStyled>
      <LayerRowStyled>
        <label>
          <CheckboxStyled type="checkbox" defaultChecked />
          <svg width="7" height="7" viewBox="0 0 7 7"><circle cx="3.500" cy="3.500" r="2.700" fill="#85588e" stroke="#5b4362" strokeWidth=".7" /></svg>
          AURIN - National Education Facilities - Universities (Point) 2018
        </label>
      </LayerRowStyled>
    </LayerListStyled>
  </DockStyled>
);

const MapCanvas = () => (
  <MapStyled>
    <svg viewBox="506 125 882 477" role="img" aria-label="Map">
      {points.map(([x, y], i) => (
        <circle key={i} cx={x} cy={y} r="2.700" fill="#8a5c94" stroke="#3c2c42" strokeWidth=".7" />
      ))}
    </svg>
  </MapStyled>
);

const SpinBox = ({ label, value, width }) => (
  <label>
    {label}
    <FieldStyled $width={width}>
      <input type="text" defaultValue={value} />
      <FieldEndStyled>
        <button aria-label={`${label} up`}><Arrow to="up" size={5} /></button>
        <button aria-label={`${label} down`}><Arrow size={5} /></button>
      </FieldEndStyled>
    </FieldStyled>
  </label>
);

const StatusBar = () => (
  <StatusBarStyled>
    <LocatorStyled $width={167}>
      <Icon name="search" size={12} />
      <input type="text" aria-label="Locate" placeholder="Type to locate (Ctrl+K)" />
    </LocatorStyled>
    <StatusGroupStyled>
      <label>
        Coordinate
        <FieldStyled $width={68}><input type="text" defaultValue="-43.62°,128.34°" /></FieldStyled>
      </label>
      <StatusIconStyled aria-label="Toggle extents"><Icon name="extents" size={14} /></StatusIconStyled>
      <label>
        Scale
        <FieldStyled $width={67}>
          <select><option>1:14120690</option></select>
          <FieldEndStyled $wide><Arrow /></FieldEndStyled>
        </FieldStyled>
      </label>
      <StatusIconStyled aria-label="Lock scale"><Icon name="lock" size={13} /></StatusIconStyled>
      <SpinBox label="Magnifier" value="100%" width={67} />
      <SpinBox label="Rotation" value="0.0 °" width={64} />
      <label><CheckboxStyled type="checkbox" defaultChecked /> Render</label>
      <CrsButtonStyled><Icon name="crs" size={13} />EPSG:4283</CrsButtonStyled>
      <MessageButtonStyled aria-label="Messages"><Icon name="message" size={16} /></MessageButtonStyled>
    </StatusGroupStyled>
  </StatusBarStyled>
);

const App = () => (
  <PageStyled>
    <GlobalStyle />
    <WindowStyled>
      <TitleBarStyled>
        <Icon name="logo" size={12} />
        <TitleStyled>*Untitled Project — QGIS</TitleStyled>
        <WindowButtonStyled aria-label="Minimize">
          <svg width="9" height="9" viewBox="0 0 9 9"><path d="M1 4.500h7" stroke="#222" /></svg>
        </WindowButtonStyled>
        <WindowButtonStyled aria-label="Restore">
          <svg width="9" height="9" viewBox="0 0 9 9"><path d="M1.500 2.500h5v5h-5zM3 2.500v-1h4.500V6h-1" fill="none" stroke="#222" /></svg>
        </WindowButtonStyled>
        <WindowButtonStyled aria-label="Close">
          <svg width="9" height="9" viewBox="0 0 9 9"><path d="M1 1l7 7M8 1L1 8" stroke="#222" /></svg>
        </WindowButtonStyled>
      </TitleBarStyled>
      <MenuBarStyled>
        {menus.map(([before, key, after]) => (
          <button key={key}>{before}<u>{key}</u>{after}</button>
        ))}
      </MenuBarStyled>
      <Toolbar groups={projectTools} tall />
      <Toolbar groups={layerTools} />
      <Toolbar groups={pluginTools} />
      <MainStyled>
        <LeftColumnStyled>
          <Browser />
          <SplitterStyled />
          <Layers />
        </LeftColumnStyled>
        <SplitterStyled $vertical />
        <RightColumnStyled>
          <MapCanvas />
          <DockStyled>
            <DockHeader title="Log Messages" tall />
            <LogBodyStyled>Message log empty</LogBodyStyled>
          </DockStyled>
        </RightColumnStyled>
      </MainStyled>
      <StatusBar />
    </WindowStyled>
  </PageStyled>
);

export default App;
